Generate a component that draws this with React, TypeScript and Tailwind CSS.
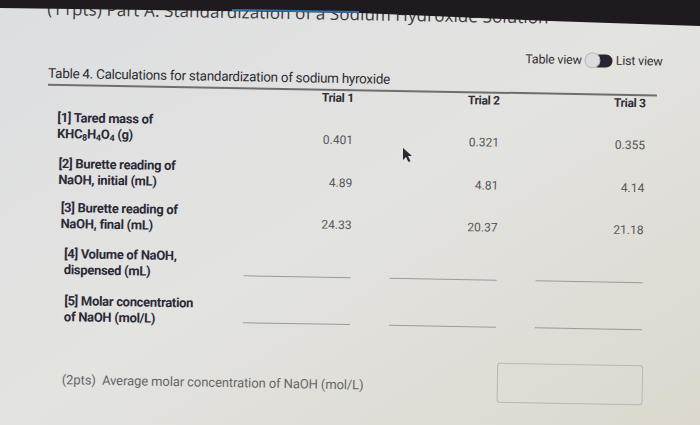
import React from "react";

const rows = [
  {
    label: (
      <>
        [1] Tared mass of
        <br />
        KHC<sub className="text-[9px]">8</sub>H<sub className="text-[9px]">4</sub>O
        <sub className="text-[9px]">4</sub> (g)
      </>
    ),
    values: ["0.401", "0.321", "0.355"],
    row: "h-[46px]",
    indent: "pl-[10px]",
    pad: "pt-[17px]",
  },
  {
    label: (
      <>
        [2] Burette reading of
        <br />
        NaOH, initial (mL)
      </>
    ),
    values: ["4.89", "4.81", "4.14"],
    row: "h-[44px]",
    indent: "pl-[12px]",
    pad: "pt-[14px]",
  },
  {
    label: (
      <>
        [3] Burette reading of
        <br />
        NaOH, final (mL)
      </>
    ),
    values: ["24.33", "20.37", "21.18"],
    row: "h-[46px]",
    indent: "pl-[15px]",
    pad: "pt-[12px]",
  },
  {
    label: (
      <>
        [4] Volume of NaOH,
        <br />
        dispensed (mL)
      </>
    ),
    values: null,
    row: "h-[47px]",
    indent: "pl-[19px]",
    pad: "",
  },
  {
    label: (
      <>
        [5] Molar concentration
        <br />
        of NaOH (mol/L)
      </>
    ),
    values: null,
    row: "h-[32px]",
    indent: "pl-[20px]",
    pad: "",
  },
];

function Toggle() {
  return (
    <div className="flex items-center justify-end pr-[40px] h-[16px] text-[12.5px] text-[#333] tracking-[-0.2px]">
      <span>Table view</span>
      <span className="relative ml-[3px] mr-[3px] flex h-[16px] w-[28px] items-center">
        <span className="ml-[7px] h-[13px] w-[21px] rounded-full bg-[#2a2530]" />
        <span className="absolute left-0 top-0 h-[16px] w-[16px] rounded-full border border-[#b9b9bd] bg-[#dcdcdf]" />
      </span>
      <span>List view</span>
    </div>
  );
}

function Cursor() {
  return (
    <svg
      className="absolute left-[402px] top-[147px]"
      width="11"
      height="16"
      viewBox="0 0 11 16"
    >
      <path d="M1 1 L1 13 L4 10 L6.5 15 L8.5 14 L6 9 L10 9 Z" fill="#2a2a35" />
    </svg>
  );
}

export default function App() {
  return (
    <div className="relative h-[425px] w-[700px] overflow-hidden bg-linear-to-br from-[#dddee1] via-[#e3e3e0] to-[#dcd8ce] font-['Roboto',sans-serif]">
      <div className="origin-[0_200px] rotate-[1deg]">
        <div className="-mt-[2px] h-[20px] pl-[44px] font-['Open_Sans',sans-serif] text-[17px] leading-[20px] tracking-[0.1px] text-[#3a3a3a] whitespace-nowrap">
          (11pts) Part A: Standardization of a Sodium Hydroxide Solution
        </div>

        <div className="mt-[24px]">
          <Toggle />
        </div>

        <div className="ml-[46px] mt-[6px] w-[609px] border-b-2 border-[#6e6e6e] pb-[3px] text-[13.5px] leading-[16px] tracking-[-0.3px] text-[#2e2e33]">
          Table 4. Calculations for standardization of sodium hyroxide
        </div>

        <div className="ml-[46px] grid grid-cols-[160px_107px_107px_107px] gap-x-[39px] text-[12px] font-bold leading-[14px] tracking-[-0.3px] text-[#2d2d36]">
          <div />
          <div className="text-right">Trial 1</div>
          <div className="text-right">Trial 2</div>
          <div className="text-right">Trial 3</div>
        </div>

        <div className="ml-[46px] mt-[10px]">
          {rows.map((r, i) => (
            <div
              key={i}
              className={`grid grid-cols-[160px_107px_107px_107px] gap-x-[39px] ${r.row}`}
            >
              <div
                className={`${r.indent} whitespace-nowrap text-[13px] font-bold leading-[16px] tracking-[-0.3px] text-[#2b2b38]`}
              >
                {r.label}
              </div>
              {r.values
                ? r.values.map((v) => (
                    <div
                      key={v}
                      className={`${r.pad} text-right text-[12px] leading-[16px] text-[#555559]`}
                    >
                      {v}
                    </div>
                  ))
                : [0, 1, 2].map((k) => (
                    <div
                      key={k}
                      className="h-[27px] border-b-[1.5px] border-[#9a9a9c]"
                    />
                  ))}
            </div>
          ))}
        </div>

        <div className="mt-[30px] flex items-start">
          <div className="ml-[65px] mt-[18px] w-[435px] text-[13px] leading-[14px] tracking-[-0.1px] text-[#66666a]">
            (2pts)&nbsp; Average molar concentration of NaOH (mol/L)
          </div>
          <div className="h-[40px] w-[146px] rounded-[3px] border border-[#b9b7b1]" />
        </div>
      </div>

      <div className="absolute left-0 top-0 h-[27px] w-[700px] bg-[#1e1a1d] [clip-path:polygon(0_0,100%_0,100%_26px,550px_21px,360px_13px,0_8px)]" />
      <div className="absolute left-[232px] top-[10px] h-[2px] w-[127px] rotate-[1deg] bg-[#2f6ea6]" />
      <Cursor />
    </div>
  );
}
